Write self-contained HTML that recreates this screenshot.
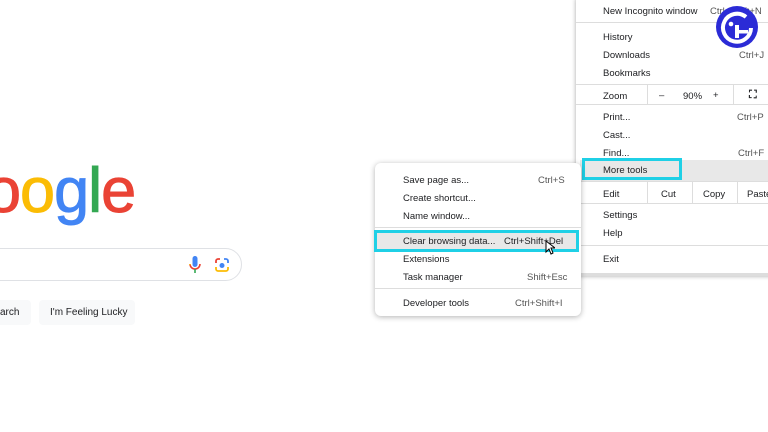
<!DOCTYPE html>
<html><head><meta charset="utf-8"><style>
*{margin:0;padding:0;box-sizing:border-box}
body{width:768px;height:432px;overflow:hidden;background:#fff;position:relative;font-family:"Liberation Sans",sans-serif;color:#202124}
.t{position:absolute;font-size:9.5px;line-height:12px;white-space:nowrap;margin-top:2px}
.g{color:#555}
.menu{position:absolute;left:576px;top:-4px;width:200px;height:279px;background:#fff;box-shadow:0 1px 5px rgba(0,0,0,.35);border-radius:4px}
.sub{position:absolute;left:375px;top:163px;width:206px;height:153px;background:#fff;box-shadow:0 1px 6px rgba(0,0,0,.3);border-radius:6px}
.hl{position:absolute;background:#e8e8e8;border:3px solid #1fd0e6}
.sep{position:absolute;height:1px;background:#ddd}
.vs{position:absolute;width:1px;background:#ddd}
.logo{position:absolute;top:155px;font-size:63px;font-family:"Liberation Sans",sans-serif;letter-spacing:-1px;-webkit-text-stroke:1px currentColor}
</style></head><body>
<div class="logo" style="left:-14px"><span style="color:#ea4335">o</span><span style="color:#fbbc05">o</span><span style="color:#4285f4">g</span><span style="color:#34a853">l</span><span style="color:#ea4335">e</span></div>
<div style="position:absolute;left:-30px;top:248px;width:272px;height:33px;border:1px solid #dfe1e5;border-radius:17px"></div>
<svg style="position:absolute;left:189px;top:256px" width="12" height="18" viewBox="0 0 12 18"><rect x="3.5" y="0" width="5" height="11" rx="2.5" fill="#4285f4"/><path d="M1 8a5 5 0 0 0 10 0" stroke="#ea4335" stroke-width="1.6" fill="none"/><path d="M6 13v4" stroke="#34a853" stroke-width="1.6"/><path d="M1 8v1" stroke="#fbbc05" stroke-width="1.6"/></svg>
<svg style="position:absolute;left:214px;top:257px" width="16" height="16" viewBox="0 0 16 16"><path d="M2 6V4a2 2 0 0 1 2-2h2" stroke="#ea4335" stroke-width="1.8" fill="none"/><path d="M10 2h2a2 2 0 0 1 2 2v2" stroke="#4285f4" stroke-width="1.8" fill="none"/><path d="M14 10v2a2 2 0 0 1-2 2H4a2 2 0 0 1-2-2v-2" stroke="#fbbc05" stroke-width="1.8" fill="none"/><circle cx="8" cy="8.5" r="2.5" fill="#4285f4"/></svg>
<div style="position:absolute;left:-20px;top:300px;width:51px;height:25px;background:#f8f9fa;border-radius:4px"></div>
<div class="t" style="left:0;top:305px;font-size:10px">arch</div>
<div style="position:absolute;left:39px;top:300px;width:96px;height:25px;background:#f8f9fa;border-radius:4px"></div>
<div class="t" style="left:50px;top:305px;font-size:10px">I'm Feeling Lucky</div>

<div class="menu"></div>
<div class="t" style="left:603px;top:4px">New Incognito window</div><div class="t g" style="left:710px;top:4px">Ctrl+Shift+N</div>
<div class="sep" style="left:576px;top:22px;width:192px"></div>
<div class="t" style="left:603px;top:30px">History</div>
<div class="t" style="left:603px;top:48px">Downloads</div><div class="t g" style="left:739px;top:48px">Ctrl+J</div>
<div class="t" style="left:603px;top:66px">Bookmarks</div>
<div class="sep" style="left:576px;top:84px;width:192px"></div>
<div class="t" style="left:603px;top:89px">Zoom</div>
<div class="vs" style="left:647px;top:84px;height:20px"></div>
<div class="t" style="left:659px;top:88px">–</div><div class="t" style="left:683px;top:89px">90%</div><div class="t" style="left:713px;top:88px">+</div>
<div class="vs" style="left:733px;top:84px;height:20px"></div>
<div class="t" style="left:749px;top:87px;font-size:11px;font-weight:bold">⛶</div>
<div class="sep" style="left:576px;top:104px;width:192px"></div>
<div class="t" style="left:603px;top:110px">Print...</div><div class="t g" style="left:737px;top:110px">Ctrl+P</div>
<div class="t" style="left:603px;top:128px">Cast...</div>
<div class="t" style="left:603px;top:146px">Find...</div><div class="t g" style="left:738px;top:146px">Ctrl+F</div>
<div style="position:absolute;left:580px;top:160px;width:188px;height:21px;background:#e8e8e8"></div>
<div class="hl" style="left:582px;top:158px;width:100px;height:22px"></div>
<div class="t" style="left:603px;top:163px">More tools</div>
<div class="sep" style="left:576px;top:181px;width:192px"></div>
<div class="t" style="left:603px;top:187px">Edit</div>
<div class="vs" style="left:647px;top:181px;height:22px"></div><div class="t" style="left:661px;top:187px">Cut</div>
<div class="vs" style="left:692px;top:181px;height:22px"></div><div class="t" style="left:703px;top:187px">Copy</div>
<div class="vs" style="left:737px;top:181px;height:22px"></div><div class="t" style="left:747px;top:187px">Paste</div>
<div class="sep" style="left:576px;top:203px;width:192px"></div>
<div class="t" style="left:603px;top:208px">Settings</div>
<div class="t" style="left:603px;top:226px">Help</div>
<div class="sep" style="left:576px;top:245px;width:192px"></div>
<div class="t" style="left:603px;top:252px">Exit</div>
<div style="position:absolute;left:576px;top:273px;width:192px;height:3px;background:#ddd"></div>

<svg style="position:absolute;left:715px;top:5px" width="44" height="44" viewBox="0 0 44 44"><circle cx="22" cy="22" r="21" fill="#2b2bd6"/><path d="M31 12A14 14 0 1 0 36 23" fill="none" stroke="#fff" stroke-width="4"/><path d="M20 20h4v13h-4z M24 25h9v3.5h-9z" fill="#fff"/><circle cx="16" cy="19" r="2.3" fill="#fff"/></svg>

<div class="sub"></div>
<div class="t" style="left:403px;top:173px">Save page as...</div><div class="t g" style="left:538px;top:173px">Ctrl+S</div>
<div class="t" style="left:403px;top:191px">Create shortcut...</div>
<div class="t" style="left:403px;top:209px">Name window...</div>
<div class="sep" style="left:375px;top:227px;width:206px"></div>
<div class="hl" style="left:374px;top:230px;width:205px;height:22px"></div>
<div class="t" style="left:403px;top:234px">Clear browsing data...</div><div class="t" style="left:504px;top:234px">Ctrl+Shift+Del</div>
<div class="t" style="left:403px;top:252px">Extensions</div>
<div class="t" style="left:403px;top:270px">Task manager</div><div class="t g" style="left:527px;top:270px">Shift+Esc</div>
<div class="sep" style="left:375px;top:288px;width:206px"></div>
<div class="t" style="left:403px;top:296px">Developer tools</div><div class="t g" style="left:515px;top:296px">Ctrl+Shift+I</div>
<svg style="position:absolute;left:545px;top:240px" width="10" height="15" viewBox="0 0 10 15"><path d="M1 1v11l3-3 2 5 2-1-2-5h4z" fill="#fff" stroke="#000" stroke-width="1"/></svg>
</body></html>
